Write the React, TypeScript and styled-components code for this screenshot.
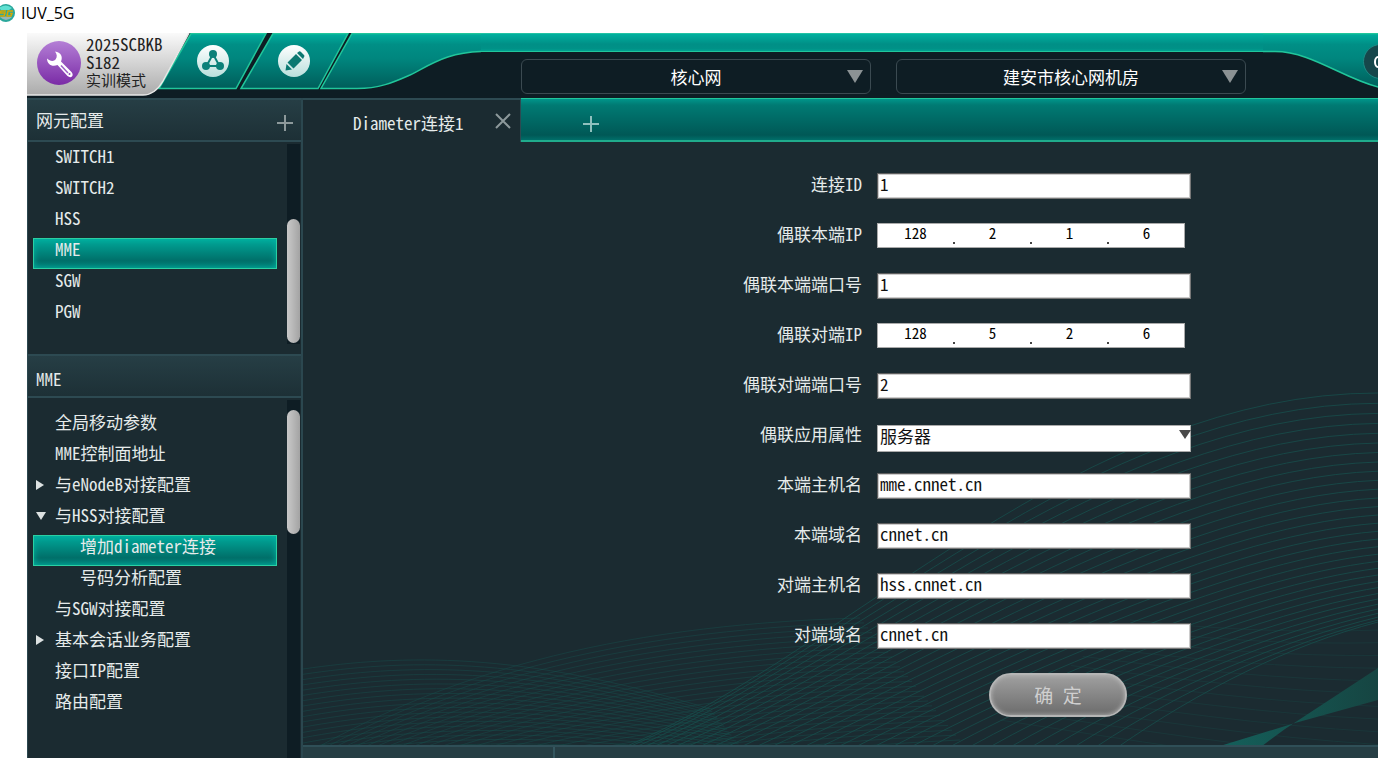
import React from "react";
import styled, { createGlobalStyle, css } from "styled-components";

const GlobalStyle = createGlobalStyle`
  * { box-sizing: border-box; }
  html, body { margin: 0; padding: 0; background: #fff; }
  body, button, input, select {
    font-family: "Noto Sans CJK SC", "Liberation Mono", monospace;
    font-size: 17px;
    line-height: 20px;
    font-feature-settings: "hwid";
  }
  body { overflow: hidden; }
`;

const c = {
  panel: "#1b2b31",
  deep: "#0e1d24",
  line: "#2b474f",
  text: "#e6ebeb",
  glow: "#21c69b",
};

const Page = styled.div`
  display: flex;
  flex-direction: column;
  height: 100vh;
`;

const TitleBar = styled.div`
  display: flex;
  align-items: flex-start;
  gap: 6px;
  flex: none;
  height: 33px;
  padding-top: 4px;
  color: #000;
  font-family: "Open Sans", sans-serif;
  font-size: 16px;
  line-height: 18px;
  font-feature-settings: normal;
  svg { flex: none; margin-left: -3px; }
`;

const Shell = styled.div`
  display: flex;
  flex-direction: column;
  flex: 1;
  min-height: 0;
  margin-left: 27px;
  background: ${c.deep};
  color: ${c.text};
`;

const Header = styled.header`
  position: relative;
  flex: none;
  display: flex;
  align-items: flex-start;
  height: 65px;
  overflow: hidden;
`;

const HeaderArt = styled.div`
  position: absolute;
  inset: 0;
  display: flex;
  align-items: flex-start;
  svg { flex: none; display: block; }
`;

const HeaderStrip = styled.div`
  flex: 1;
  height: 19px;
  background: linear-gradient(#00b09f, #008f86 60%, #009187 85%, #00a090);
  border-top: 1px solid #22c3a4;
  border-bottom: 1px solid ${c.glow};
`;

const Brand = styled.div`
  position: relative;
  display: flex;
  gap: 5px;
  flex: none;
  width: 164px;
  padding: 3px 0 0 10px;
  color: #222;
  line-height: 18px;
  svg { flex: none; margin-top: 5px; }
`;

const BrandText = styled.div`
  margin-top: -1px;
`;

const Mode = styled.div`
  font-size: 15px;
`;

const ToolButton = styled.button`
  position: relative;
  flex: none;
  width: 32px;
  height: 32px;
  margin: 12px 49px 0 0;
  padding: 0;
  border: 0;
  border-radius: 50%;
  background: linear-gradient(#fff, #b9dfdc);
  svg { display: block; }
  &:first-of-type { margin-left: 6px; }
`;

const Pickers = styled.div`
  position: relative;
  display: flex;
  gap: 25px;
  margin: 26px 0 0 162px;
`;

const Picker = styled.label`
  position: relative;
  width: 350px;
  svg { position: absolute; right: 8px; top: 11px; pointer-events: none; }
  select {
    appearance: none;
    width: 100%;
    height: 35px;
    padding: 1px 0 0;
    border: 1px solid #3b4a51;
    border-radius: 6px;
    background: #0e1d24;
    color: #fff;
    text-align: center;
    text-align-last: center;
  }
`;

const CornerButton = styled.button`
  position: absolute;
  right: -20px;
  top: 11px;
  width: 35px;
  height: 35px;
  padding: 0 0 0 8px;
  border: 1px solid #1c8b85;
  border-radius: 50%;
  background: #16474b;
  svg { display: block; }
`;

const Body = styled.div`
  display: flex;
  flex: 1;
  min-height: 0;
`;

const Sidebar = styled.aside`
  display: flex;
  flex-direction: column;
  flex: none;
  width: 276px;
  border-left: 1px solid ${c.line};
  border-right: 2px solid ${c.line};
  background: ${c.panel};
`;

const PanelHead = styled.div<{ $low?: boolean }>`
  display: flex;
  align-items: center;
  justify-content: space-between;
  flex: none;
  height: 44px;
  padding: ${(p) => (p.$low ? 5 : 0)}px 8px 0;
  border-top: 2px solid #2d4a52;
  border-bottom: 2px solid #2d4a52;
  background: linear-gradient(#263e45, #1d3036);
  h2 { margin: 0; font-size: 17px; font-weight: 400; }
  button { margin-top: 6px; }
`;

const IconButton = styled.button`
  display: block;
  padding: 0;
  border: 0;
  background: none;
  color: #8d999b;
  svg { display: block; }
`;

const ListArea = styled.div<{ $grow?: boolean }>`
  display: flex;
  flex: ${(p) => (p.$grow ? "1" : "0 0 212px")};
  min-height: 0;
  padding-right: 1px;
`;

const List = styled.ul<{ $top: number }>`
  flex: 1;
  min-width: 0;
  margin: 0;
  padding: ${(p) => p.$top}px 10px 0 5px;
  list-style: none;
`;

const Item = styled.li<{ $active?: boolean; $sub?: boolean }>`
  display: flex;
  align-items: flex-start;
  height: 31px;
  padding-left: ${(p) => (p.$sub ? 47 : 22)}px;
  white-space: nowrap;
  position: relative;
  ${(p) =>
    p.$active &&
    css`
      &::before {
        content: "";
        position: absolute;
        inset: 0;
        border: 1px solid #2bd0a3;
        background: linear-gradient(#00a99b, #008a80 40%, #006f69 75%, #008078);
        box-shadow: inset 0 0 6px #00b3a1;
      }
    `}
  a {
    position: relative;
    color: inherit;
    text-decoration: none;
    line-height: 22px;
  }
  svg { position: absolute; left: 3px; top: 7px; }
`;

const Track = styled.div<{ $top: number }>`
  flex: none;
  width: 13px;
  margin: 2px 0 ${(p) => (p.$top ? 10 : 0)}px;
  padding-top: ${(p) => (p.$top ? p.$top : 10)}px;
  background: ${c.deep};
`;

const Thumb = styled.div`
  height: 124px;
  border-radius: 7px;
  background: linear-gradient(90deg, #c9c9c9, #a3a3a3);
`;

const Main = styled.main`
  display: flex;
  flex-direction: column;
  flex: 1;
  min-width: 0;
`;

const TabBar = styled.div`
  display: flex;
  flex: none;
  height: 44px;
`;

const Tab = styled.div`
  display: flex;
  align-items: center;
  justify-content: space-between;
  width: 218px;
  padding: 4px 9px 0 50px;
  border-top: 2px solid #2d4a52;
  border-right: 1px solid #2d4a52;
  background: ${c.panel};
  button { margin-bottom: 4px; }
`;

const TabRest = styled.div`
  flex: 1;
  padding: 17px 0 0 62px;
  border-top: 1px solid ${c.glow};
  border-bottom: 2px solid #20ac8c;
  background: linear-gradient(#00958a, #007a73 15%, #005856 88%, #006e69);
  button { color: #8fc0bd; }
`;

const Content = styled.section`
  position: relative;
  flex: 1;
  min-height: 0;
  background: ${c.panel};
  overflow: hidden;
`;

const Waves = styled.svg`
  position: absolute;
  inset: 0;
  width: 100%;
  height: 100%;
`;

const Form = styled.form`
  position: relative;
  display: grid;
  grid-template-columns: 52% 314px;
  column-gap: 15px;
  grid-auto-rows: 50px;
  padding-top: 31px;
  > label {
    justify-self: end;
    line-height: 22px;
  }
`;

const TextBox = styled.input`
  width: 314px;
  height: 26px;
  padding: 0 2px 5px;
  border: 1px solid #777;
  border-color: #5d5d5d #777 #777 #5d5d5d;
  border-radius: 0;
  background: #fff;
  box-shadow: inset 0 0 0 1px #ccc;
  color: #111;
  outline: 0;
`;

const AddressBox = styled.div`
  display: flex;
  width: 308px;
  height: 25px;
  border: 1px solid #aaa;
  background: #fff;
  input {
    flex: 1;
    min-width: 0;
    height: 18px;
    padding: 0;
    border: 0;
    background: none;
    color: #000;
    font-size: 15px;
    text-align: center;
    outline: 0;
  }
  span { width: 2px; height: 2px; margin-top: 18px; background: #444; }
`;

const Choice = styled.div`
  position: relative;
  width: 314px;
  padding-top: 2px;
  svg { position: absolute; right: 0; top: 7px; pointer-events: none; }
  select {
    appearance: none;
    width: 100%;
    height: 27px;
    padding: 0 2px 5px;
    border: 1px solid #aaa;
    border-radius: 0;
    background: #fff;
    color: #111;
  }
`;

const Submit = styled.button`
  grid-column: 2;
  width: 138px;
  height: 44px;
  margin-left: 112px;
  padding: 0;
  border: 2px solid #b5b5b5;
  border-radius: 22px;
  background: linear-gradient(#a0a0a0, #6c6c6c);
  box-shadow: inset 0 0 4px #bbb;
  color: #cfcfcf;
  font-size: 19px;
`;

const StatusBar = styled.footer`
  display: flex;
  flex: none;
  height: 13px;
  border-top: 2px solid #2f4f57;
  background: #263e44;
  div { width: 252px; border-right: 2px solid #34565e; }
`;

const Down = ({ w, h, fill }: { w: number; h: number; fill: string }) => (
  <svg width={w} height={h} viewBox="0 0 10 8" preserveAspectRatio="none">
    <path d="M0 0H10L5 8Z" fill={fill} />
  </svg>
);

const Plus = () => (
  <svg width="16" height="16" viewBox="0 0 16 16">
    <path d="M8 0V16M0 8H16" stroke="currentColor" strokeWidth="2" />
  </svg>
);

const lerp = (a: number, b: number, t: number) => a + (b - a) * t;

/* Blends two cubic curves into a fan of lines that bunches up at its start and its far end. */
function fan(from: number[], to: number[], count: number, ease = 1) {
  return Array.from({ length: count }, (_, i) => {
    const u = i / (count - 1);
    const head = Math.pow(u, ease);
    const tail = 1 - Math.pow(1 - u, ease);
    const p = from.map((v, k) => lerp(v, to[k], k < 4 ? head : tail).toFixed(1));
    return `M${p[0]} ${p[1]}C${p.slice(2).join(" ")}`;
  }).join("");
}

const Backdrop = () => (
  <Waves viewBox="303 142 1075 603" preserveAspectRatio="xMaxYMax slice" fill="none" aria-hidden="true">
    <defs>
      <linearGradient id="beam" x1="0" x2="1">
        <stop offset="0" stopColor="#14605b" />
        <stop offset="1" stopColor="#164542" />
      </linearGradient>
    </defs>
    <path
      stroke="#17504d"
      strokeOpacity="0.75"
      d={fan([625, 747, 850, 650, 1080, 393, 1378, 393], [1118, 747, 1200, 690, 1290, 645, 1378, 622], 32, 1.4)}
    />
    <path
      stroke="#17504d"
      strokeOpacity="0.45"
      d={fan([318, 747, 440, 680, 600, 625, 860, 618], [318, 860, 440, 810, 640, 755, 960, 740], 26)}
    />
    <path
      stroke="#17504d"
      strokeOpacity="0.45"
      d={fan([303, 669, 400, 655, 520, 650, 710, 709], [303, 780, 400, 760, 520, 745, 760, 770], 22)}
    />
    <path
      stroke="#17504d"
      strokeOpacity="0.3"
      d={fan([1130, 620, 1220, 630, 1300, 633, 1378, 630], [1000, 720, 1130, 740, 1250, 760, 1378, 770], 12)}
    />
    <path d="M1220 746L1295 723L1378 700V668L1285 729L1262 746Z" fill="url(#beam)" />
  </Waves>
);

const nodes = ["SWITCH1", "SWITCH2", "HSS", "MME", "SGW", "PGW"];

const menu: { name: string; mark?: "open" | "closed"; sub?: boolean; active?: boolean }[] = [
  { name: "全局移动参数" },
  { name: "MME控制面地址" },
  { name: "与eNodeB对接配置", mark: "closed" },
  { name: "与HSS对接配置", mark: "open" },
  { name: "增加diameter连接", sub: true, active: true },
  { name: "号码分析配置", sub: true },
  { name: "与SGW对接配置" },
  { name: "基本会话业务配置", mark: "closed" },
  { name: "接口IP配置" },
  { name: "路由配置" },
];

type Field = { label: string; kind: "text" | "ip" | "select"; value: string };

const fields: Field[] = [
  { label: "连接ID", kind: "text", value: "1" },
  { label: "偶联本端IP", kind: "ip", value: "128.2.1.6" },
  { label: "偶联本端端口号", kind: "text", value: "1" },
  { label: "偶联对端IP", kind: "ip", value: "128.5.2.6" },
  { label: "偶联对端端口号", kind: "text", value: "2" },
  { label: "偶联应用属性", kind: "select", value: "服务器" },
  { label: "本端主机名", kind: "text", value: "mme.cnnet.cn" },
  { label: "本端域名", kind: "text", value: "cnnet.cn" },
  { label: "对端主机名", kind: "text", value: "hss.cnnet.cn" },
  { label: "对端域名", kind: "text", value: "cnnet.cn" },
];

function FieldRow({ field, id }: { field: Field; id: string }) {
  return (
    <>
      <label htmlFor={id}>{field.label}</label>
      {field.kind === "text" && <TextBox id={id} defaultValue={field.value} />}
      {field.kind === "ip" && (
        <AddressBox>
          {field.value.split(".").map((part, i) => (
            <React.Fragment key={i}>
              {i > 0 && <span />}
              <input id={i ? undefined : id} aria-label={`${field.label} ${i + 1}`} defaultValue={part} />
            </React.Fragment>
          ))}
        </AddressBox>
      )}
      {field.kind === "select" && (
        <Choice>
          <select id={id} defaultValue={field.value}>
            <option>{field.value}</option>
          </select>
          <Down w={12} h={9} fill="#4a4a4a" />
        </Choice>
      )}
    </>
  );
}

const LeftArt = () => (
  <svg width="454" height="65" viewBox="27 33 454 65">
    <defs>
      <linearGradient id="teal" gradientUnits="userSpaceOnUse" x1="0" y1="33" x2="0" y2="90">
        <stop offset="0" stopColor="#00b09f" />
        <stop offset="0.2" stopColor="#008f86" />
        <stop offset="0.45" stopColor="#00867e" />
        <stop offset="1" stopColor="#005b58" />
      </linearGradient>
      <linearGradient id="silver" x1="0" y1="0" x2="0" y2="1">
        <stop offset="0" stopColor="#fafafa" />
        <stop offset="1" stopColor="#ababab" />
      </linearGradient>
    </defs>
    <g fill="url(#teal)" stroke="#21c69b" strokeWidth="1.5">
      <path d="M191 33.5H266L236 88.5H159Z" />
      <path d="M273 33.5H348L318 88.5H241Z" />
      <path d="M486 33.5H352L321 88.5H357C380 88.500 394 82 410 75C432 64 448 51.500 486 51.500" />
    </g>
    <path d="M27 33H189L163 81Q155 95 143 95H27Z" fill="url(#silver)" />
    <path d="M189 33L163 81Q155 95 143 95H27" fill="none" stroke="#e8e8e8" strokeWidth="1.5" />
  </svg>
);

const RightArt = () => (
  <svg width="115" height="65" viewBox="1263 33 115 65">
    <path
      d="M1260 33.5H1382V88C1345 80 1312 51.5 1275 51.5H1260"
      fill="url(#teal)"
      stroke="#21c69b"
      strokeWidth="1.5"
    />
  </svg>
);

export default function App() {
  return (
    <Page>
      <GlobalStyle />
      <TitleBar>
        <svg width="18" height="18" viewBox="0 0 18 18">
          <circle cx="9" cy="9" r="9" fill="#2aa79b" />
          <path d="M2 4Q9 -1 15 4L12 6H4Z" fill="#5fe0d2" />
          <path d="M3 13Q9 12 15 13Q9 19 3 13Z" fill="#9ab5b2" />
          <path d="M9 7H4L3 9H8L7 12H2M16 7H11L10 12H14L15 9.500H13" fill="none" stroke="#d9a800" strokeWidth="1.5" />
        </svg>
        <span>IUV_5G</span>
      </TitleBar>
      <Shell>
        <Header>
          <HeaderArt aria-hidden="true">
            <LeftArt />
            <HeaderStrip />
            <RightArt />
          </HeaderArt>
          <Brand>
            <svg width="44" height="44" viewBox="0 0 44 44">
              <defs>
                <linearGradient id="violet" x1="0" y1="0" x2="0" y2="1">
                  <stop offset="0" stopColor="#b47fd6" />
                  <stop offset="1" stopColor="#7a2ba6" />
                </linearGradient>
              </defs>
              <circle cx="22" cy="22" r="22" fill="url(#violet)" />
              <path
                d="M18 10.500C24 11 26 16 24 20.500L34.500 31Q36.500 33.500 35 35.500Q33 37 30.500 35L20.500 24C15 26.500 10 23 10 17.500C13 20.500 17 20.500 18.500 18.500C20.500 16 20 13 18 10.500Z"
                fill="#fff"
              />
              <path d="M24 24.500L31 32" stroke="#9a5fc4" strokeWidth="1.5" />
              <circle cx="32.500" cy="33" r="1" fill="#8a45b5" />
            </svg>
            <BrandText>
              <div>2025SCBKB</div>
              <div>S182</div>
              <Mode>实训模式</Mode>
            </BrandText>
          </Brand>
          <ToolButton aria-label="拓扑">
            <svg width="32" height="32" viewBox="0 0 32 32">
              <path d="M16 9L9.500 21H22.500Z" fill="none" stroke="#0b8079" strokeWidth="2" />
              <circle cx="16" cy="9" r="4" fill="#0b8079" />
              <circle cx="9" cy="21" r="4" fill="#0b8079" />
              <circle cx="23" cy="21" r="4" fill="#0b8079" />
            </svg>
          </ToolButton>
          <ToolButton aria-label="编辑">
            <svg width="32" height="32" viewBox="0 0 32 32">
              <path
                d="M7.500 25.500L8.500 19L14 24.500ZM9.500 17.500L18 9L24 15L15.500 23.500ZM19 8L21 6.500Q22 6 23 7L26 10Q27 11 26 12L25 14Z"
                fill="#0b7871"
              />
            </svg>
          </ToolButton>
          <Pickers>
            <Picker>
              <select aria-label="网络">
                <option>核心网</option>
              </select>
              <Down w={16} h={13} fill="#8b9294" />
            </Picker>
            <Picker>
              <select aria-label="机房">
                <option>建安市核心网机房</option>
              </select>
              <Down w={16} h={13} fill="#8b9294" />
            </Picker>
          </Pickers>
          <CornerButton aria-label="更多">
            <svg width="14" height="14" viewBox="0 0 14 14">
              <ellipse cx="6" cy="7" rx="3" ry="5" fill="none" stroke="#fff" strokeWidth="2" />
            </svg>
          </CornerButton>
        </Header>
        <Body>
          <Sidebar>
            <PanelHead>
              <h2>网元配置</h2>
              <IconButton aria-label="添加网元">
                <Plus />
              </IconButton>
            </PanelHead>
            <ListArea>
              <List $top={3}>
                {nodes.map((n) => (
                  <Item key={n} $active={n === "MME"}>
                    <a href="#node">{n}</a>
                  </Item>
                ))}
              </List>
              <Track $top={75}>
                <Thumb />
              </Track>
            </ListArea>
            <PanelHead $low>
              <h2>MME</h2>
            </PanelHead>
            <ListArea $grow>
              <List $top={13}>
                {menu.map((m) => (
                  <Item key={m.name} $active={m.active} $sub={m.sub}>
                    {m.mark && (
                      <svg width="10" height="10" viewBox="0 0 10 10">
                        <path d={m.mark === "open" ? "M0 1H10L5 9Z" : "M0 0V10L8 5Z"} fill="#dde2e2" />
                      </svg>
                    )}
                    <a href="#menu">{m.name}</a>
                  </Item>
                ))}
              </List>
              <Track $top={0}>
                <Thumb />
              </Track>
            </ListArea>
          </Sidebar>
          <Main>
            <TabBar>
              <Tab>
                <span>Diameter连接1</span>
                <IconButton aria-label="关闭">
                  <svg width="16" height="16" viewBox="0 0 16 16">
                    <path d="M1 1L15 15M15 1L1 15" stroke="currentColor" strokeWidth="2" />
                  </svg>
                </IconButton>
              </Tab>
              <TabRest>
                <IconButton aria-label="新建">
                  <Plus />
                </IconButton>
              </TabRest>
            </TabBar>
            <Content>
              <Backdrop />
              <Form onSubmit={(e) => e.preventDefault()}>
                {fields.map((f, i) => (
                  <FieldRow key={f.label} field={f} id={`field-${i}`} />
                ))}
                <Submit type="submit">确 定</Submit>
              </Form>
            </Content>
            <StatusBar>
              <div />
            </StatusBar>
          </Main>
        </Body>
      </Shell>
    </Page>
  );
}
